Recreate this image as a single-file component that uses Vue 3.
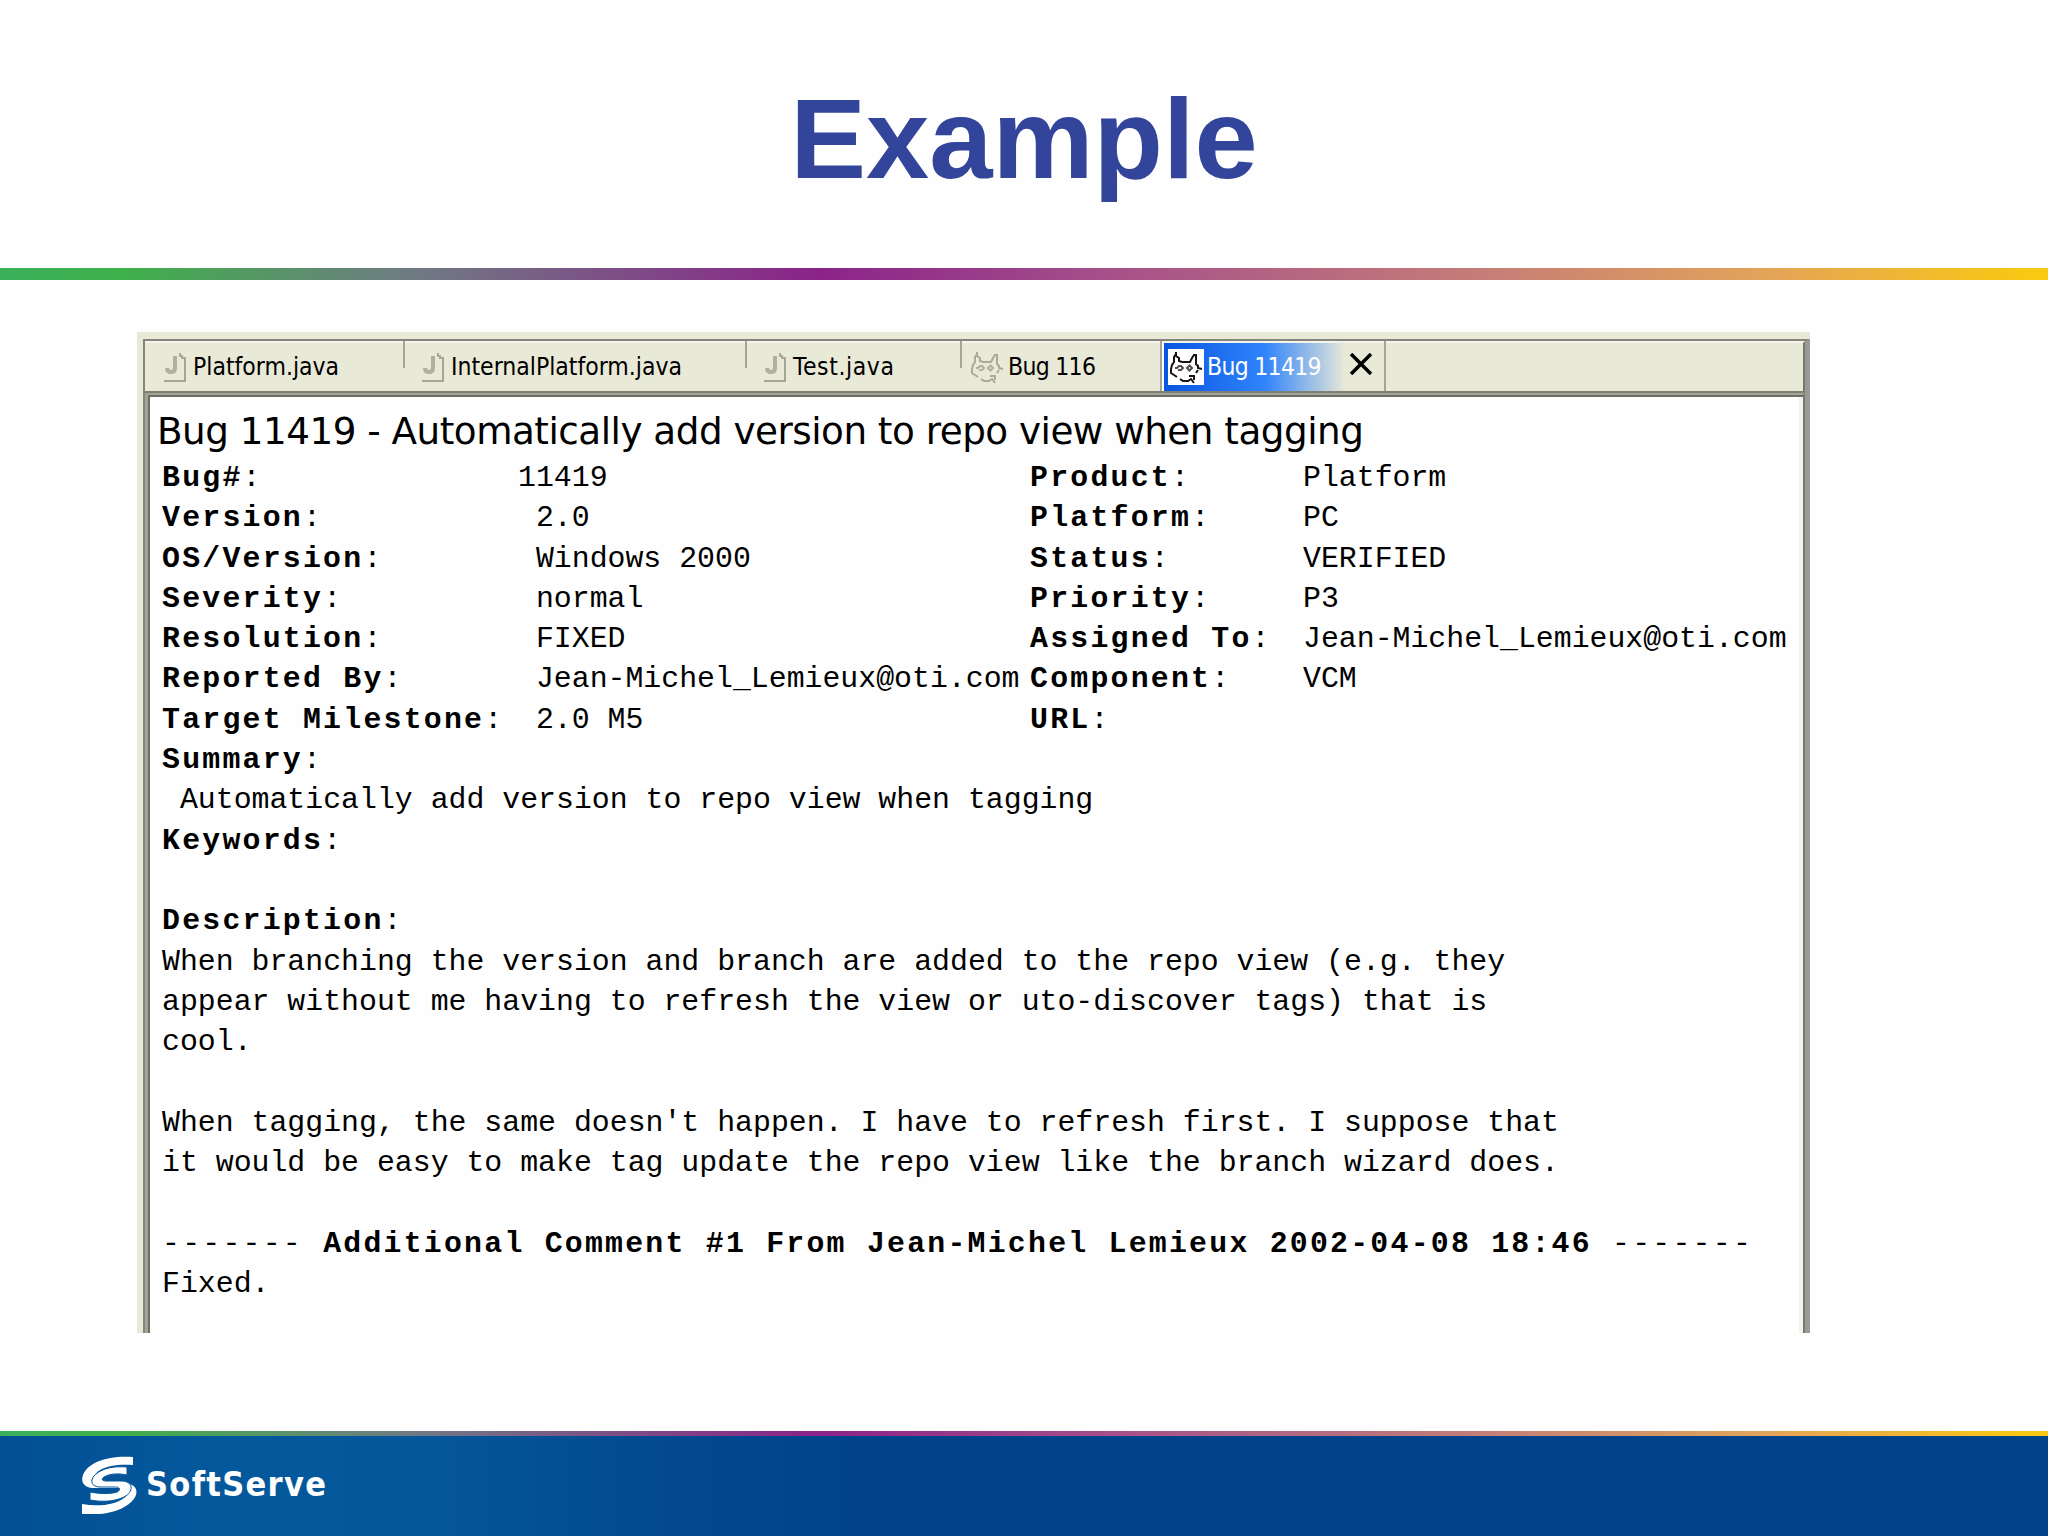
<script setup>
const tabs = [
  { label: 'Platform.java', icon: 'java', size: 'w1' },
  { label: 'InternalPlatform.java', icon: 'java', size: 'w2' },
  { label: 'Test.java', icon: 'java', size: 'w3' },
  { label: 'Bug 116', icon: 'cat', size: 'w4' },
  { label: 'Bug 11419', icon: 'cat', size: 'w5', active: true }
];

// leading spaces are part of the report text
const fields = [
  ['Bug#', '11419', 'Product', 'Platform'],
  ['Version', ' 2.0', 'Platform', 'PC'],
  ['OS/Version', ' Windows 2000', 'Status', 'VERIFIED'],
  ['Severity', ' normal', 'Priority', 'P3'],
  ['Resolution', ' FIXED', 'Assigned To', 'Jean-Michel_Lemieux@oti.com'],
  ['Reported By', ' Jean-Michel_Lemieux@oti.com', 'Component', 'VCM'],
  ['Target Milestone', ' 2.0 M5', 'URL', '']
];

const description = [
  'When branching the version and branch are added to the repo view (e.g. they',
  'appear without me having to refresh the view or uto-discover tags) that is',
  'cool.',
  '',
  "When tagging, the same doesn't happen. I have to refresh first. I suppose that",
  'it would be easy to make tag update the repo view like the branch wizard does.'
].join('\n');
</script>

<template>
  <div class="slide">
    <header class="slide-title">
      <h1>Example</h1>
    </header>
    <div class="rainbow"></div>

    <main class="content">
      <div class="editor">
        <div class="frame">
          <!-- Tabs -->
          <div class="tabs">
            <div v-for="tab in tabs" :key="tab.label" class="tab" :class="[tab.size, { active: tab.active }]">
              <svg v-if="tab.icon === 'java'" class="java-icon" viewBox="0 0 24 32">
                <path d="M12 5V17Q12 21 8 21Q4 21 4 17" fill="none" stroke="#b0b0a2" stroke-width="4" />
                <path d="M18 7H22V30H1" fill="none" stroke="#a5a596" stroke-width="2" />
                <path d="M16 2H18V4H20V6H22V8H18V6H16Z" fill="#a9a99b" />
              </svg>
              <svg v-else class="cat-icon" viewBox="0 0 36 36">
                <rect v-if="tab.active" width="36" height="36" fill="#fff" />
                <g fill="none" :stroke="tab.active ? '#1a1212' : '#a9a99b'" stroke-width="2">
                  <path d="M8 3V7L11 9V12L14 13H22L24 9L26 6H28V15L30 17V19L34 20M8 5L6 8V13L4 16L3 20V24L6 26L9 28" />
                  <path d="M12 30L15 32H20L23 30L26 34M30 21L28 24M21 27H26V31" />
                  <path d="M7 19H9L11 17H13L15 19L13 21H10M19 19L21.500 16.500L24 19L21.500 21.500Z" :opacity="tab.active ? 0.75 : 0.9" />
                </g>
              </svg>
              <span class="tab-label">{{ tab.label }}</span>
              <span v-if="tab.active" class="close">
                <svg viewBox="0 0 24 22"><path d="M2 1L22 21M22 1L2 21" stroke="#000" stroke-width="3.500" /></svg>
              </span>
            </div>
          </div>

          <!-- Bug report -->
          <div class="report">
            <h2>Bug 11419 - Automatically add version to repo view when tagging</h2>
            <div class="fields">
              <template v-for="row in fields" :key="row[0]">
                <div><b>{{ row[0] }}</b>:</div>
                <div>{{ row[1] }}</div>
                <div><b>{{ row[2] }}</b>:</div>
                <div>{{ row[3] }}</div>
              </template>
            </div>
            <div class="line"><b>Summary</b>:</div>
            <div class="line">{{ ' Automatically add version to repo view when tagging' }}</div>
            <div class="line"><b>Keywords</b>:</div>
            <div class="line gap"><b>Description</b>:</div>
            <div class="line">{{ description }}</div>
            <div class="line gap comment"><span>-------</span> <b>Additional Comment #1 From Jean-Michel Lemieux 2002-04-08 18:46</b> <span>-------</span></div>
            <div class="line">Fixed.</div>
          </div>
        </div>
      </div>
    </main>

    <footer class="footer">
      <svg class="logo" viewBox="0 0 58 58">
        <path d="M52 1V9C40 8 27 9 19 14C11 19 11 26 18 27H42C52 27 57 32 55 39C51 50 33 58 15 58H1V48C17 51 34 49 43 42C48 38 48 33 42 32H16C4 33-1 27 2 19C7 6 28-1 52 1Z" fill="#fff" />
        <path d="M46 11V19C37 17 29 18 25 20C20 22 20 25 25 25H40C53 25 53 36 43 41C33 46 20 46 9 44V36C19 38 30 38 36 36C40 34 39 31 35 31H18C9 30 9 23 15 18C22 12 33 10 46 11Z" fill="#fff" stroke="#04559b" stroke-width="1" />
      </svg>
      <span class="brand">SoftServe</span>
    </footer>
  </div>
</template>

<style>
body {
  background: #fefefe;
}
</style>

<style scoped>
.slide {
  --rainbow: linear-gradient(90deg, #3bb05c 0, #3fb04a 6%, #6f7b83 20%, #8b2389 40%, #a5508a 54%, #c47c78 72%, #e2a35a 86%, #f9c813 99%);
  width: 2048px;
  height: 1536px;
  display: flex;
  flex-direction: column;
  overflow: hidden;
  background: #fefefe;
  color: #000;
}

.slide-title {
  height: 268px;
  box-sizing: border-box;
  padding-top: 74px;
  text-align: center;
}

h1 {
  margin: 0;
  font: bold 113.7px/130px "Liberation Sans", Arial, sans-serif;
  color: #32459a;
}

.rainbow {
  height: 12px;
  background: var(--rainbow);
}

.content {
  height: 1150.5px;
  box-sizing: border-box;
  padding: 52px 0 0 137px;
}

.editor {
  width: 1673px;
  height: 1001px;
  box-sizing: border-box;
  padding: 7px 0 0 6px;
  background: #e9e9d8;
}

.frame {
  height: 994px;
  box-sizing: border-box;
  border: solid #85857c;
  border-width: 2px 5px 0 2px;
  border-right-color: #9a9a96;
  display: flex;
  flex-direction: column;
}

/* Tabs */
.tabs {
  height: 52px;
  flex: none;
  display: flex;
  box-sizing: border-box;
  border-top: 2px solid #f4f4ea;
  border-right: 2px solid #77776e;
  border-bottom: 2px solid #7f7f75;
  background: #e9e9d8;
}

.tab {
  position: relative;
  box-sizing: border-box;
  display: flex;
  align-items: center;
  font: 24.5px/30px "DejaVu Sans Condensed", "DejaVu Sans", Tahoma, sans-serif;
  font-stretch: condensed;
  white-space: nowrap;
}

.tab::after {
  content: '';
  position: absolute;
  top: -2px;
  right: 0;
  width: 2px;
  height: 27px;
  background: #a5a59a;
}

.w1 { width: 260px; padding-left: 18px; }
.w2 { width: 342px; padding-left: 16px; }
.w3 { width: 215px; padding-left: 16px; letter-spacing: 0.6px; }
.w4 { width: 200px; padding-left: 7px; letter-spacing: -0.7px; }
.w5 { width: 224px; padding-left: 4px; letter-spacing: -0.7px; }

.w4::after,
.w5::after {
  height: 50px;
}

.java-icon {
  width: 24px;
  height: 32px;
  margin-right: 6px;
}

.cat-icon {
  width: 36px;
  height: 36px;
  margin-right: 3px;
}

.tab.active {
  background: linear-gradient(90deg, #0a55e0 0, #2f83fb 45%, #e9e9d8 82%);
  border-left: 2px solid #fff;
  color: #fff;
}

.close {
  display: flex;
  align-items: center;
  justify-content: center;
  width: 36px;
  height: 42px;
  margin-left: auto;
  margin-right: 7px;
  padding-bottom: 6px;
  box-sizing: border-box;
  background: #e9e9d8;
}

.close svg {
  width: 24px;
  height: 22px;
}

/* Bug report */
.report {
  flex: 1;
  box-sizing: border-box;
  padding: 14px 0 0 14px;
  border: solid #a3a396;
  border-width: 2px 2px 0 3px;
  border-right-color: #77776e;
  box-shadow: inset 0 2px #6e6e62, inset 2px 0 #6e6e62, inset -4px 0 #f3f3f0;
  background: #fefefe;
  font: 29.85px/40.3px "Liberation Mono", "Courier New", monospace;
  white-space: pre;
}

h2 {
  margin: 0 0 5px -5px;
  font: 37.3px/44px "DejaVu Sans", Tahoma, sans-serif;
  letter-spacing: -0.5px;
}

.fields {
  display: grid;
  grid-template-columns: 356px 512px 273px 1fr;
  grid-auto-rows: 40.3px;
}

b {
  letter-spacing: 2.23px;
}

.gap {
  margin-top: 40.3px;
}

.comment {
  letter-spacing: 2.23px;
}

/* Footer */
.footer {
  flex: 1;
  display: flex;
  align-items: center;
  box-sizing: border-box;
  padding: 0 0 2px 81px;
  border-top: 5px solid;
  border-image: var(--rainbow) 1;
  background: linear-gradient(90deg, #034f95 0, #04589c 10%, #04579b 20%, #03498f 33%, #00438b 42%, #00438b 100%);
}

.logo {
  width: 58px;
  height: 58px;
}

.brand {
  margin: -2px 0 0 7px;
  font: bold 34px/40px "DejaVu Sans Condensed", "DejaVu Sans", Verdana, sans-serif;
  font-stretch: condensed;
  letter-spacing: 1.3px;
  color: #fff;
}
</style>
